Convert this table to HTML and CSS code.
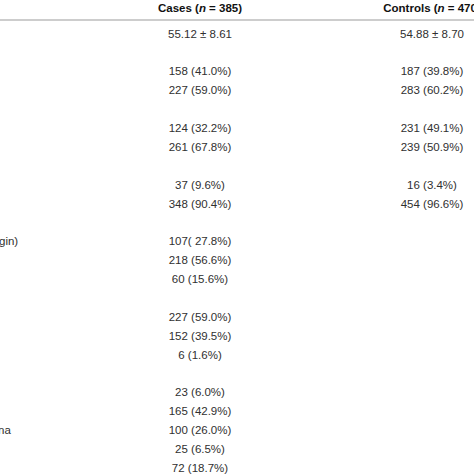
FILE: index.html
```html
<!DOCTYPE html>
<html>
<head>
<meta charset="utf-8">
<link rel="stylesheet" href="styles.css">
</head>
<body>
<div class="table">
  <div class="row head">
    <div class="label"></div>
    <div class="val">Cases (<i>n</i> = 385)</div>
    <div class="val">Controls (<i>n</i> = 470)</div>
  </div>
  <div class="body">
    <div class="row"><div class="label"></div><div class="val">55.12 ± 8.61</div><div class="val">54.88 ± 8.70</div></div>
    <div class="row"><div class="label"></div><div class="val"></div><div class="val"></div></div>
    <div class="row"><div class="label"></div><div class="val">158 (41.0%)</div><div class="val">187 (39.8%)</div></div>
    <div class="row"><div class="label"></div><div class="val">227 (59.0%)</div><div class="val">283 (60.2%)</div></div>
    <div class="row"><div class="label"></div><div class="val"></div><div class="val"></div></div>
    <div class="row"><div class="label"></div><div class="val">124 (32.2%)</div><div class="val">231 (49.1%)</div></div>
    <div class="row"><div class="label"></div><div class="val">261 (67.8%)</div><div class="val">239 (50.9%)</div></div>
    <div class="row"><div class="label"></div><div class="val"></div><div class="val"></div></div>
    <div class="row"><div class="label"></div><div class="val">37 (9.6%)</div><div class="val">16 (3.4%)</div></div>
    <div class="row"><div class="label"></div><div class="val">348 (90.4%)</div><div class="val">454 (96.6%)</div></div>
    <div class="row"><div class="label"></div><div class="val"></div><div class="val"></div></div>
    <div class="row"><div class="label cut1">gin)</div><div class="val">107( 27.8%)</div><div class="val"></div></div>
    <div class="row"><div class="label"></div><div class="val">218 (56.6%)</div><div class="val"></div></div>
    <div class="row"><div class="label"></div><div class="val">60 (15.6%)</div><div class="val"></div></div>
    <div class="row"><div class="label"></div><div class="val"></div><div class="val"></div></div>
    <div class="row"><div class="label"></div><div class="val">227 (59.0%)</div><div class="val"></div></div>
    <div class="row"><div class="label"></div><div class="val">152 (39.5%)</div><div class="val"></div></div>
    <div class="row"><div class="label"></div><div class="val">6 (1.6%)</div><div class="val"></div></div>
    <div class="row"><div class="label"></div><div class="val"></div><div class="val"></div></div>
    <div class="row"><div class="label"></div><div class="val">23 (6.0%)</div><div class="val"></div></div>
    <div class="row"><div class="label"></div><div class="val">165 (42.9%)</div><div class="val"></div></div>
    <div class="row"><div class="label cut2">na</div><div class="val">100 (26.0%)</div><div class="val"></div></div>
    <div class="row"><div class="label"></div><div class="val">25 (6.5%)</div><div class="val"></div></div>
    <div class="row"><div class="label"></div><div class="val">72 (18.7%)</div><div class="val"></div></div>
  </div>
</div>
</body>
</html>
```

FILE: styles.css
```css
html, body {
  margin: 0;
  padding: 0;
  background: #fff;
  overflow: hidden;
  width: 474px;
  height: 474px;
}
.table {
  width: 484px;
  margin-top: -3px;
  font-family: "Liberation Sans", Arial, sans-serif;
  font-size: 11.5px;
  color: #303030;
}
.row {
  display: grid;
  grid-template-columns: 150px 100px 1fr 104px;
  height: 18.9px;
  line-height: 18.9px;
  white-space: nowrap;
}
.row .val:last-child {
  grid-column: 4;
}
.head {
  height: 22px;
  line-height: 22px;
  font-weight: bold;
  color: #111;
  border-bottom: 2px solid #cdcdcd;
}
.body {
  padding-top: 3.5px;
}
.val {
  text-align: center;
}
.label {
  text-align: left;
}
.cut1 {
  margin-left: -1px;
}
.cut2 {
  margin-left: -2px;
}
```
